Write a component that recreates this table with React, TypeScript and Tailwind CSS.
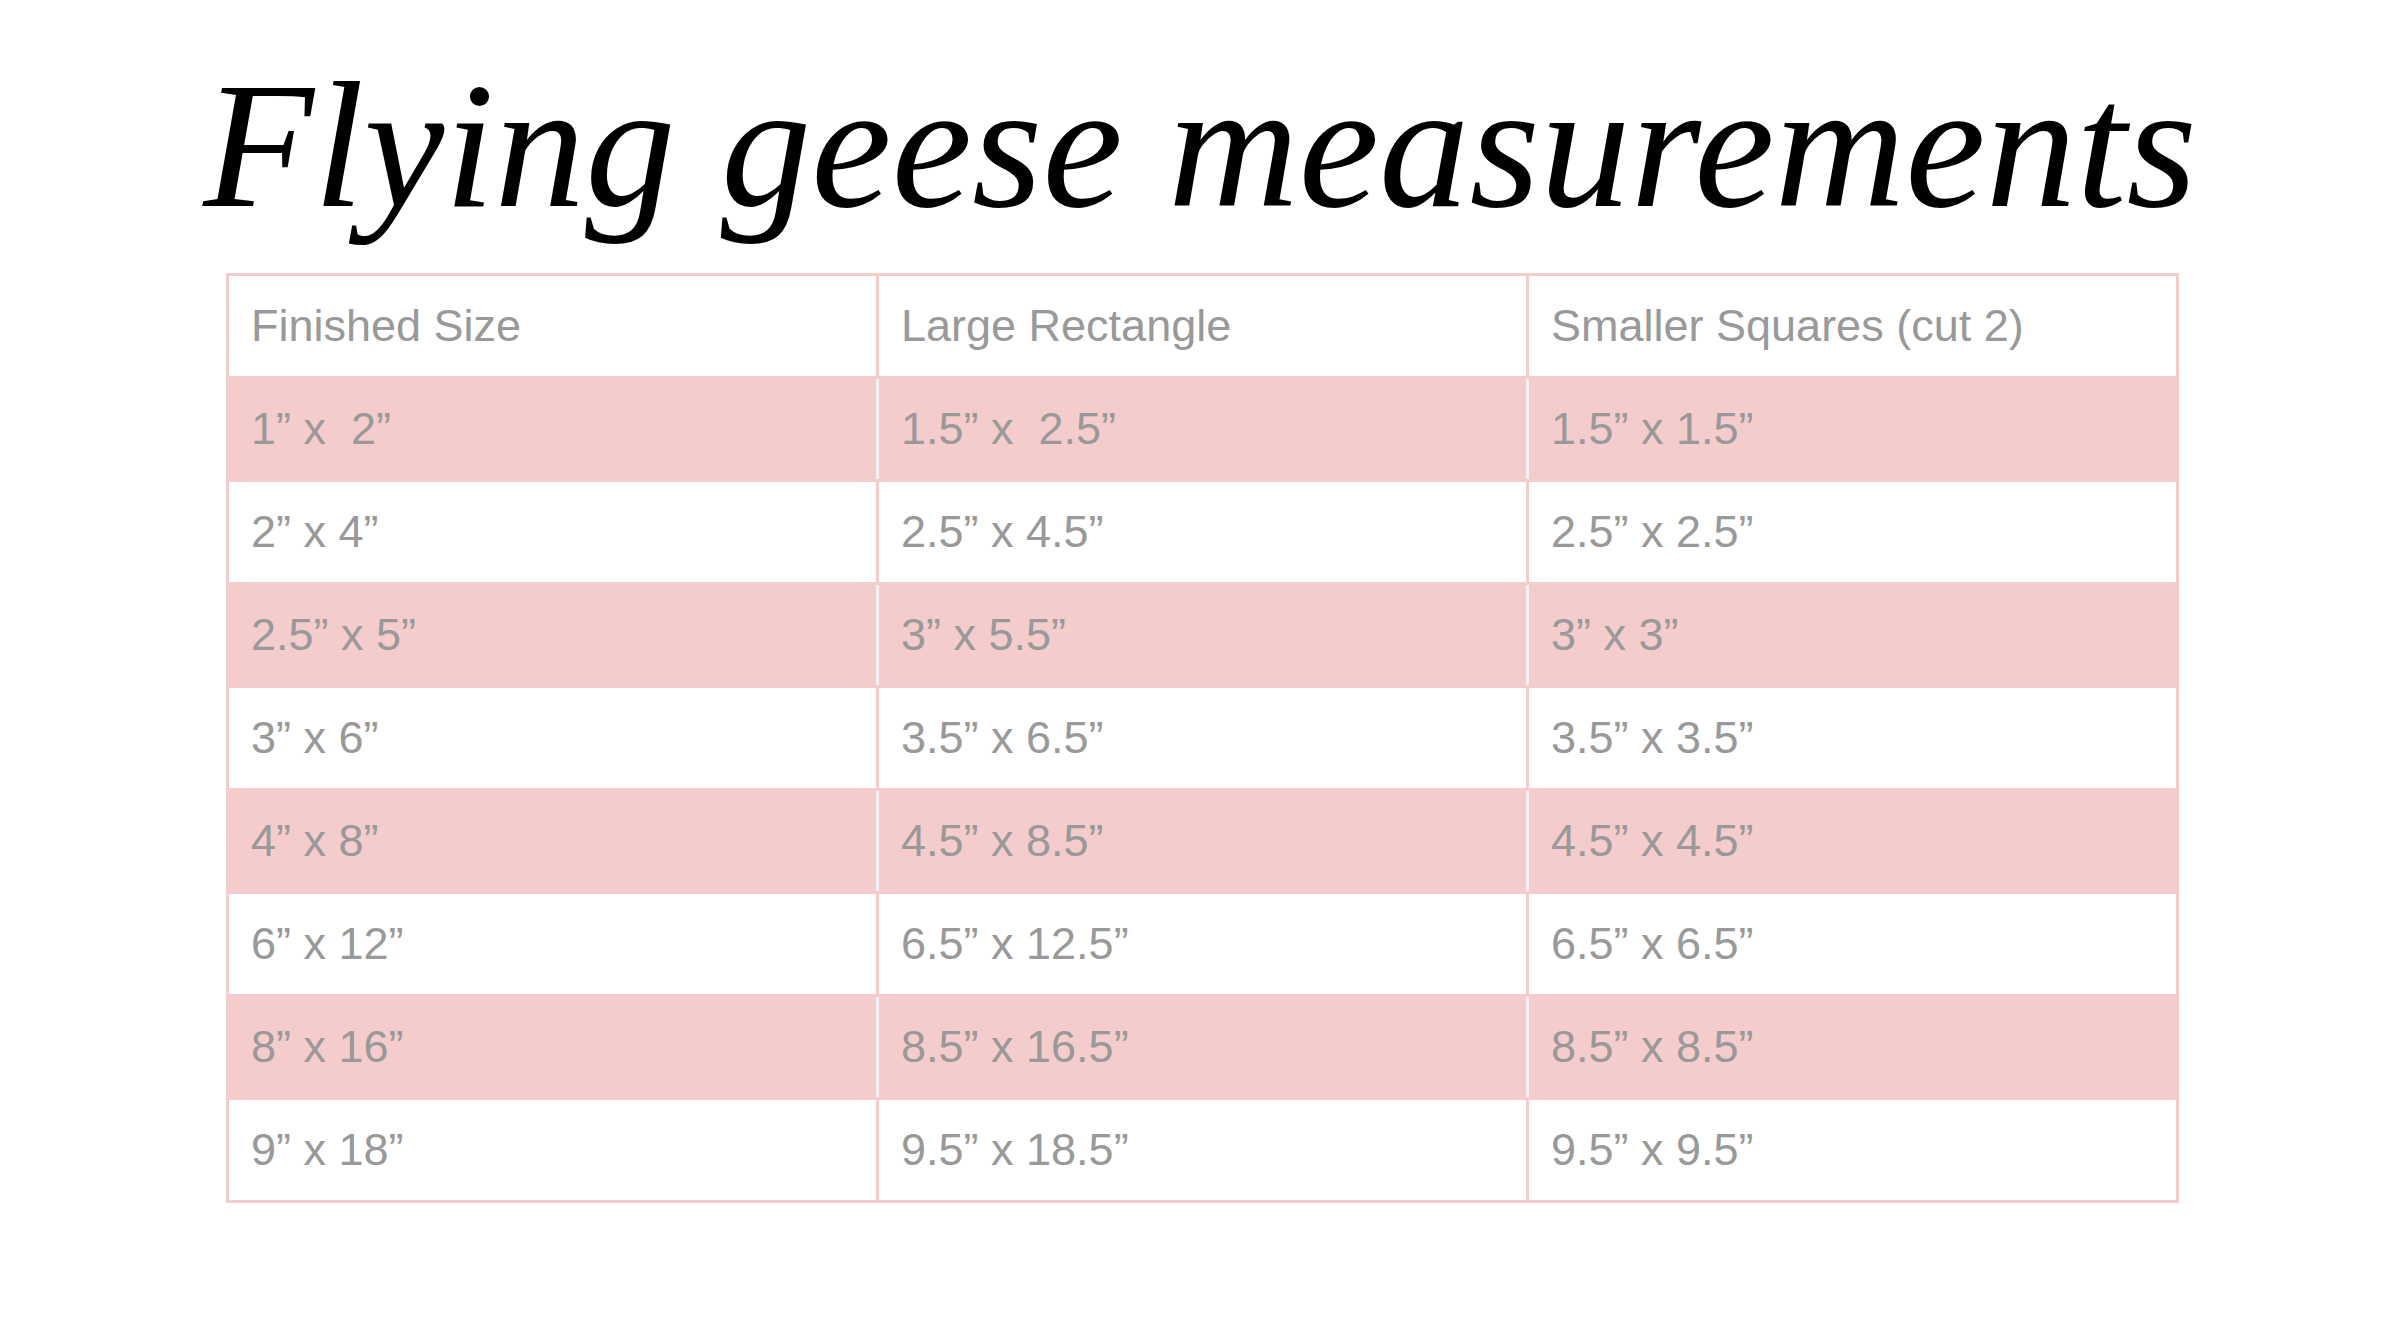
const rows: [string, string, string][] = [
  ['1\u201d x  2\u201d', '1.5\u201d x  2.5\u201d', '1.5\u201d x 1.5\u201d'],
  ['2\u201d x 4\u201d', '2.5\u201d x 4.5\u201d', '2.5\u201d x 2.5\u201d'],
  ['2.5\u201d x 5\u201d', '3\u201d x 5.5\u201d', '3\u201d x 3\u201d'],
  ['3\u201d x 6\u201d', '3.5\u201d x 6.5\u201d', '3.5\u201d x 3.5\u201d'],
  ['4\u201d x 8\u201d', '4.5\u201d x 8.5\u201d', '4.5\u201d x 4.5\u201d'],
  ['6\u201d x 12\u201d', '6.5\u201d x 12.5\u201d', '6.5\u201d x 6.5\u201d'],
  ['8\u201d x 16\u201d', '8.5\u201d x 16.5\u201d', '8.5\u201d x 8.5\u201d'],
  ['9\u201d x 18\u201d', '9.5\u201d x 18.5\u201d', '9.5\u201d x 9.5\u201d'],
]

function Row({ cells, pink }: { cells: string[]; pink: boolean }) {
  return (
    <div className={`grid grid-cols-3 gap-[3px] ${pink ? 'bg-[#f3f1f1]' : 'bg-[#f4cccc]'}`}>
      {cells.map((c, i) => (
        <div
          key={i}
          className={`h-[100px] flex items-center pl-[22px] whitespace-pre ${pink ? 'bg-[#f4cccc]' : 'bg-white'}`}
        >
          {c}
        </div>
      ))}
    </div>
  )
}

export default function App() {
  return (
    <div className="w-[2400px] h-[1323px] bg-white overflow-hidden">
      {/* Title */}
      <div className="h-[273px] pt-[55px] text-center">
        <h1
          className="text-[181px] leading-none italic text-black"
          style={{ fontFamily: '"Liberation Serif", serif' }}
        >
          Flying geese measurements
        </h1>
      </div>

      {/* Table */}
      <div
        className="ml-[226px] w-[1953px] border-[3px] border-[#f4cccc] bg-[#f4cccc] flex flex-col gap-[3px] text-[45px] text-[#999999]"
        style={{ fontFamily: '"Liberation Sans", Arial, sans-serif' }}
      >
        <Row cells={['Finished Size', 'Large Rectangle', 'Smaller Squares (cut 2)']} pink={false} />
        {rows.map((r, i) => (
          <Row key={i} cells={r} pink={i % 2 === 0} />
        ))}
      </div>
    </div>
  )
}
